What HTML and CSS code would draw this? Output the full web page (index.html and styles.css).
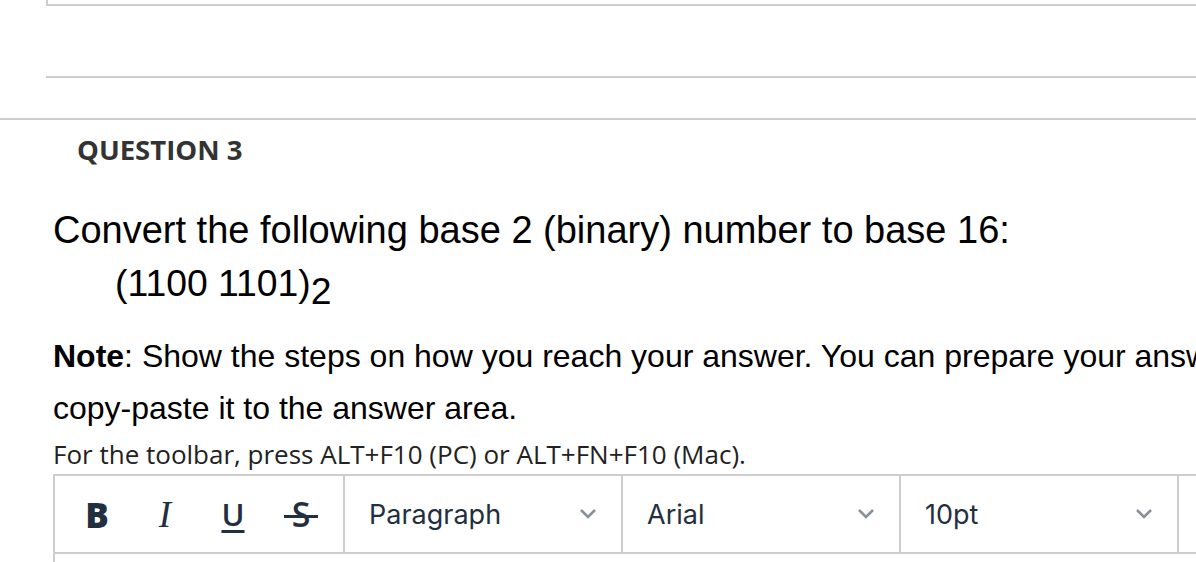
FILE: index.html
```html
<!DOCTYPE html>
<html lang="en">
<head>
  <meta charset="UTF-8">
  <title>Question 3</title>
  <link rel="stylesheet" href="styles.css">
</head>
<body>

<div class="prev-answer"></div>
<div class="prev-rule"></div>

<div class="question">
  <h3 class="question-title">QUESTION 3</h3>

  <div class="question-body">
    <p class="prompt">Convert the following base 2 (binary) number to base 16:</p>
    <p class="number">(1100 1101)<sub>2</sub></p>

    <p class="note"><strong>Note</strong>: Show the steps on how you reach your answer. You can prepare your answer in a document and then copy-paste it to the answer area.</p>

    <p class="hint">For the toolbar, press ALT+F10 (PC) or ALT+FN+F10 (Mac).</p>

    <div class="editor">
      <div class="toolbar">
        <div class="tb-group formats">
          <button class="tb-btn fmt-bold" title="Bold">B</button>
          <button class="tb-btn fmt-italic" title="Italic">I</button>
          <button class="tb-btn fmt-underline" title="Underline">U</button>
          <button class="tb-btn fmt-strike" title="Strikethrough"><span>S</span></button>
        </div>
        <div class="tb-group select">
          <span class="select-label">Paragraph</span>
          <svg class="chevron" width="18" height="12" viewBox="0 0 18 12"><path d="M2 2l7 7 7-7" fill="none" stroke="currentColor" stroke-width="2.6"/></svg>
        </div>
        <div class="tb-group select">
          <span class="select-label">Arial</span>
          <svg class="chevron" width="18" height="12" viewBox="0 0 18 12"><path d="M2 2l7 7 7-7" fill="none" stroke="currentColor" stroke-width="2.6"/></svg>
        </div>
        <div class="tb-group select">
          <span class="select-label">10pt</span>
          <svg class="chevron" width="18" height="12" viewBox="0 0 18 12"><path d="M2 2l7 7 7-7" fill="none" stroke="currentColor" stroke-width="2.6"/></svg>
        </div>
        <div class="tb-group more"></div>
      </div>
      <div class="editor-area"></div>
    </div>
  </div>
</div>

</body>
</html>
```

FILE: styles.css
```css
body {
  margin: 0;
  font-family: "Open Sans", sans-serif;
  background: #fff;
  overflow: hidden;
}

.prev-answer {
  margin-left: 46px;
  height: 4px;
  border-left: 2px solid #cdcdcd;
  border-bottom: 2px solid #cdcdcd;
}

.prev-rule {
  margin-left: 46px;
  margin-top: 70px;
  border-top: 2px solid #cdcdcd;
}

.question {
  margin-top: 40px;
  border-top: 2px solid #cdcdcd;
}

.question-title {
  margin: 0;
  padding: 12px 0 0 77px;
  font-size: 27.5px;
  line-height: 36px;
  font-weight: bold;
  color: #333;
}

.question-body {
  padding-left: 53px;
  overflow: hidden;
}

.prompt {
  margin: 37px 0 0;
  font-family: "Liberation Sans", Arial, sans-serif;
  font-size: 38px;
  line-height: 50px;
  color: #000;
}

.number {
  margin: 0;
  padding-left: 62px;
  font-family: "Liberation Sans", Arial, sans-serif;
  font-size: 37.33px;
  line-height: 56px;
  color: #000;
}

.number sub {
  font-size: inherit;
  line-height: 0;
}

.note {
  width: 1600px;
  margin: 19px 0 0;
  font-family: "Liberation Sans", Arial, sans-serif;
  font-size: 32px;
  line-height: 52px;
  color: #000;
}

.hint {
  margin: 2px 0 0;
  font-size: 26px;
  line-height: 36px;
  color: #222;
}

.editor {
  margin-top: 2px;
  border-top: 2px solid #cdcdcd;
  border-left: 2px solid #cdcdcd;
}

.toolbar {
  display: flex;
  height: 76px;
  border-bottom: 2px solid #cdcdcd;
}

.tb-group {
  display: flex;
  align-items: center;
  border-right: 2px solid #cdcdcd;
  color: #222f3e;
}

.formats {
  padding: 0 8px;
}

.tb-btn {
  width: 68px;
  height: 60px;
  padding: 0;
  border: none;
  background: none;
  color: #222f3e;
  cursor: pointer;
}

.fmt-bold {
  font-family: "Open Sans", sans-serif;
  font-weight: 800;
  font-size: 35px;
}

.fmt-italic {
  font-family: "Liberation Serif", serif;
  font-style: italic;
  font-size: 37px;
}

.fmt-underline {
  font-family: "Open Sans", sans-serif;
  font-weight: 600;
  font-size: 31px;
  text-decoration: underline;
  text-decoration-thickness: 3px;
  text-underline-offset: 4px;
}

.fmt-strike {
  font-family: "Open Sans", sans-serif;
  font-weight: 600;
  font-size: 34px;
}

.fmt-strike span {
  position: relative;
  display: inline-block;
}

.fmt-strike span::after {
  content: "";
  position: absolute;
  left: -8px;
  right: -8px;
  top: 52%;
  height: 3px;
  background: #222f3e;
}

.select {
  width: 228px;
  padding: 0 24px;
  justify-content: space-between;
}

.select-label {
  font-family: Inter, "Open Sans", sans-serif;
  font-size: 27px;
  color: #222f3e;
}

.chevron {
  color: #8a9099;
}

.more {
  flex: 1;
  border-right: none;
}

.editor-area {
  height: 40px;
}
```
